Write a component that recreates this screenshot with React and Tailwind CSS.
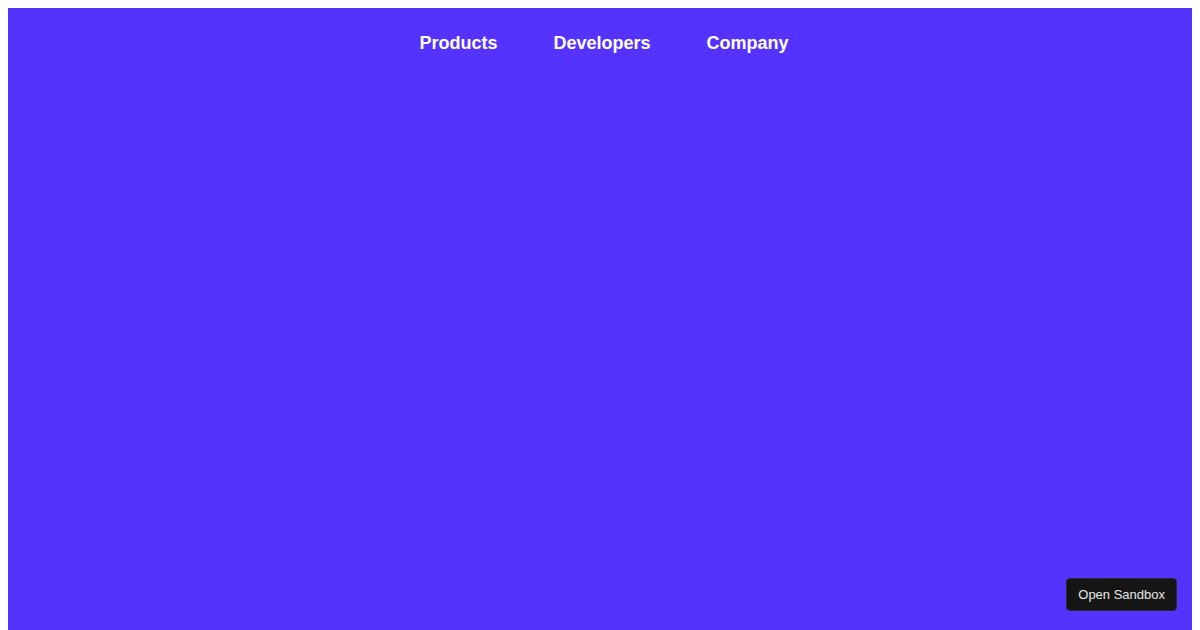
import React from 'react';

const links = ['Products', 'Developers', 'Company'];

export default function App() {
  return (
    <div className="p-2 bg-white font-['Liberation_Sans',Arial,sans-serif]">
      {/* Основной синий блок */}
      <div className="relative h-[640px] bg-[#5433ff]">
        <nav className="flex justify-center gap-14 pt-[24px] pl-[8px]">
          {links.map(link => (
            <a key={link} href="#" className="text-[18px] leading-[22px] font-bold text-white">
              {link}
            </a>
          ))}
        </nav>
      </div>

      <button className="fixed right-[23px] bottom-[19px] h-[33px] px-[11px] rounded-[4px] border border-[#2b2b2b] bg-[#151515] text-[13px] text-[#e8e8e8]">
        Open Sandbox
      </button>
    </div>
  );
}
